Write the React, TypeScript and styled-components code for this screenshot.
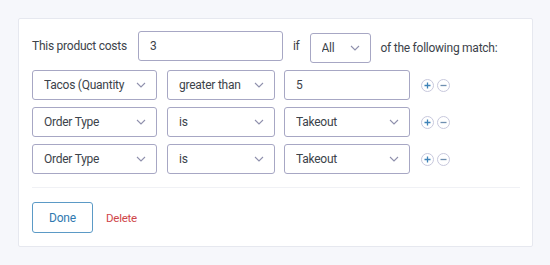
import styled, { createGlobalStyle } from "styled-components";

const Global = createGlobalStyle`
  html, body {
    margin: 0;
    padding: 0;
    background: #f6f7fb;
  }
  body {
    font-family: Roboto, "Noto Sans", sans-serif;
    color: #3c434a;
    letter-spacing: -0.25px;
  }
`;

const Page = styled.div`
  padding: 18px 0 0 18px;
`;

const Card = styled.div`
  box-sizing: border-box;
  width: 515px;
  height: 229px;
  background: #fff;
  border: 1px solid #e6e8ef;
  border-radius: 2px;
  padding: 12px 13px 0 13px;
`;

const TopRow = styled.div`
  display: flex;
  align-items: flex-start;
  height: 32px;
  font-size: 12px;
`;

const Label = styled.span<{ ml?: number; mr?: number; top?: number }>`
  margin-left: ${(p) => p.ml ?? 0}px;
  margin-right: ${(p) => p.mr ?? 0}px;
  margin-top: ${(p) => p.top ?? 0}px;
  line-height: 30px;
  white-space: nowrap;
  flex-shrink: 0;
`;

const Field = styled.div<{ w: number; offset?: number }>`
  box-sizing: border-box;
  width: ${(p) => p.w}px;
  height: 30px;
  margin-top: ${(p) => p.offset ?? 0}px;
  border: 1px solid #a7a7c4;
  border-radius: 3px;
  display: flex;
  align-items: center;
  padding: 0 10px 0 11px;
  font-size: 12px;
  color: #3c434a;
  background: #fff;
  flex-shrink: 0;
`;

const FieldText = styled.span`
  flex: 1;
  overflow: hidden;
  white-space: nowrap;
  margin-right: 6px;
`;

const Rows = styled.div`
  display: flex;
  flex-direction: column;
  gap: 7px;
  margin-top: 7px;
`;

const Row = styled.div`
  display: flex;
  align-items: center;
`;

const Gap = styled.div<{ w: number }>`
  width: ${(p) => p.w}px;
  flex-shrink: 0;
`;

const Icons = styled.div`
  display: flex;
  gap: 3px;
  margin-left: 11px;
`;

const RoundBtn = styled.span`
  width: 13px;
  height: 13px;
  display: flex;
  align-items: center;
  justify-content: center;
`;

const Divider = styled.div`
  height: 1px;
  width: 488px;
  background: #f0f1f5;
  margin-top: 13px;
`;

const Footer = styled.div`
  display: flex;
  align-items: center;
  margin-top: 14px;
`;

const DoneButton = styled.button`
  box-sizing: border-box;
  width: 61px;
  height: 31px;
  border: 1px solid #5b9ac6;
  border-radius: 3px;
  background: #fff;
  color: #2f79b0;
  font-family: Roboto, "Noto Sans", sans-serif;
  font-size: 12px;
  letter-spacing: -0.2px;
  padding: 0;
`;

const DeleteLink = styled.span`
  margin-left: 13px;
  color: #d0464a;
  font-size: 11.5px;
`;

const Chevron = () => (
  <svg width="10" height="6" viewBox="0 0 10 6" fill="none">
    <path d="M1 1l4 4 4-4" stroke="#8f90ad" strokeWidth="1.1" />
  </svg>
);

const Plus = () => (
  <svg width="13" height="13" viewBox="0 0 13 13" fill="none">
    <circle cx="6.5" cy="6.5" r="6" stroke="#c7c8dc" />
    <path d="M6.5 3.5v6M3.5 6.5h6" stroke="#3f83b8" strokeWidth="1.3" />
  </svg>
);

const Minus = () => (
  <svg width="13" height="13" viewBox="0 0 13 13" fill="none">
    <circle cx="6.5" cy="6.5" r="6" stroke="#c7c8dc" />
    <path d="M3.5 6.5h6" stroke="#6f8fb0" strokeWidth="1.3" />
  </svg>
);

const Select = ({ w, text, offset }: { w: number; text: string; offset?: number }) => (
  <Field w={w} offset={offset}>
    <FieldText>{text}</FieldText>
    <Chevron />
  </Field>
);

const conditions = [
  ["Tacos (Quantity", "greater than", "5", false],
  ["Order Type", "is", "Takeout", true],
  ["Order Type", "is", "Takeout", true],
] as const;

export default function App() {
  return (
    <Page>
      <Global />
      <Card>
        <TopRow>
          <Label mr={11}>This product costs</Label>
          <Field w={145}>
            <FieldText>3</FieldText>
          </Field>
          <Label ml={10} mr={10}>if</Label>
          <Select w={61} text="All" offset={2} />
          <Label ml={10} top={2}>of the following match:</Label>
        </TopRow>
        <Rows>
          {conditions.map(([a, b, c, isSelect], i) => (
            <Row key={i}>
              <Select w={125} text={a} />
              <Gap w={10} />
              <Select w={108} text={b} />
              <Gap w={9} />
              {isSelect ? (
                <Select w={126} text={c} />
              ) : (
                <Field w={126}>
                  <FieldText>{c}</FieldText>
                </Field>
              )}
              <Icons>
                <RoundBtn>
                  <Plus />
                </RoundBtn>
                <RoundBtn>
                  <Minus />
                </RoundBtn>
              </Icons>
            </Row>
          ))}
        </Rows>
        <Divider />
        <Footer>
          <DoneButton>Done</DoneButton>
          <DeleteLink>Delete</DeleteLink>
        </Footer>
      </Card>
    </Page>
  );
}
